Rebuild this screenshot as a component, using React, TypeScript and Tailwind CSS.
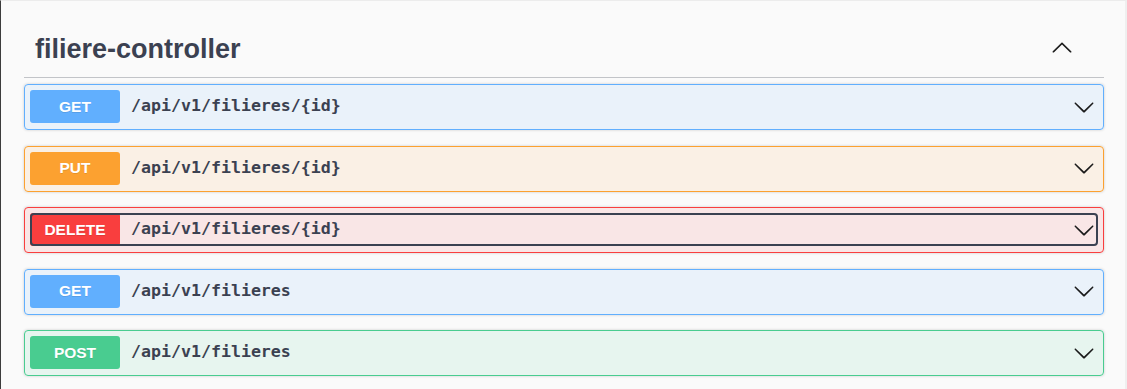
const ops = [
  {
    method: "GET",
    path: "/api/v1/filieres/{id}",
    row: "border-[#61affe] bg-[rgba(97,175,254,0.1)]",
    badge: "bg-[#61affe]",
    focused: false,
  },
  {
    method: "PUT",
    path: "/api/v1/filieres/{id}",
    row: "border-[#fca130] bg-[rgba(252,161,48,0.1)]",
    badge: "bg-[#fca130]",
    focused: false,
  },
  {
    method: "DELETE",
    path: "/api/v1/filieres/{id}",
    row: "border-[#f93e3e] bg-[rgba(249,62,62,0.1)]",
    badge: "bg-[#f93e3e]",
    focused: true,
  },
  {
    method: "GET",
    path: "/api/v1/filieres",
    row: "border-[#61affe] bg-[rgba(97,175,254,0.1)]",
    badge: "bg-[#61affe]",
    focused: false,
  },
  {
    method: "POST",
    path: "/api/v1/filieres",
    row: "border-[#49cc90] bg-[rgba(73,204,144,0.1)]",
    badge: "bg-[#49cc90]",
    focused: false,
  },
];

const ArrowDown = () => (
  <svg width="22" height="22" viewBox="0 0 20 20" className="shrink-0 text-[#1b1b1b]">
    <path
      fill="currentColor"
      d="M17.418 6.109c.272-.268.709-.268.979 0s.271.701 0 .969l-7.908 7.83c-.27.268-.707.268-.979 0l-7.908-7.83c-.27-.268-.27-.701 0-.969.271-.268.709-.268.979 0L10 13.25l7.418-7.141z"
    />
  </svg>
);

const ArrowUp = () => (
  <svg width="22" height="22" viewBox="0 0 20 20" className="shrink-0 text-[#1b1b1b]">
    <path
      fill="currentColor"
      d="M17.418 14.908c.272.268.709.268.979 0s.271-.701 0-.969l-7.908-7.83c-.27-.268-.707-.268-.979 0l-7.908 7.83c-.27.268-.27.701 0 .969.271.268.709.268.979 0L10 7.77l7.418 7.138z"
    />
  </svg>
);

export default function App() {
  return (
    <div className="min-h-screen bg-[#fafafa] border-t border-t-[#ececec] border-l border-l-[#3c3c3c] border-r-2 border-r-[#efefef] pt-[22px] pl-[23px] pr-[21px] font-['Liberation_Sans',Arial,sans-serif]">
      {/* tag header */}
      <div className="flex items-center justify-between border-b border-[#c2c4c8] pt-[11px] pb-[13px] pl-[11px] pr-[31px] mb-[6px]">
        <h3 className="text-[27px] leading-[30px] font-bold text-[#3b4151]">filiere-controller</h3>
        <div className="mb-[4px]">
          <ArrowUp />
        </div>
      </div>

      {/* operations */}
      <div className="flex flex-col gap-[15.5px]">
        {ops.map((op, i) => (
          <div
            key={i}
            className={`flex h-[46px] rounded-[4px] border px-[5px] pt-[5px] pb-[6px] shadow-[0_0_3px_rgba(0,0,0,0.19)] ${op.row}`}
          >
            <div
              className={
                op.focused
                  ? "flex flex-1 items-center rounded-[4px] outline-2 outline-offset-[-2px] outline-[#3b4151]"
                  : "flex flex-1 items-center"
              }
            >
              <span
                className={`flex h-[33px] w-[90px] shrink-0 items-center justify-center rounded-[3px] text-[15.5px] font-bold text-white [text-shadow:0_1px_0_rgba(0,0,0,0.1)] ${op.badge}`}
              >
                {op.method}
              </span>
              <span className="ml-[11px] flex-1 font-['DejaVu_Sans_Mono',monospace] text-[16.6px] font-bold text-[#3b4151]">
                {op.path}
              </span>
              <div className="mr-[3px]">
                <ArrowDown />
              </div>
            </div>
          </div>
        ))}
      </div>
    </div>
  );
}
